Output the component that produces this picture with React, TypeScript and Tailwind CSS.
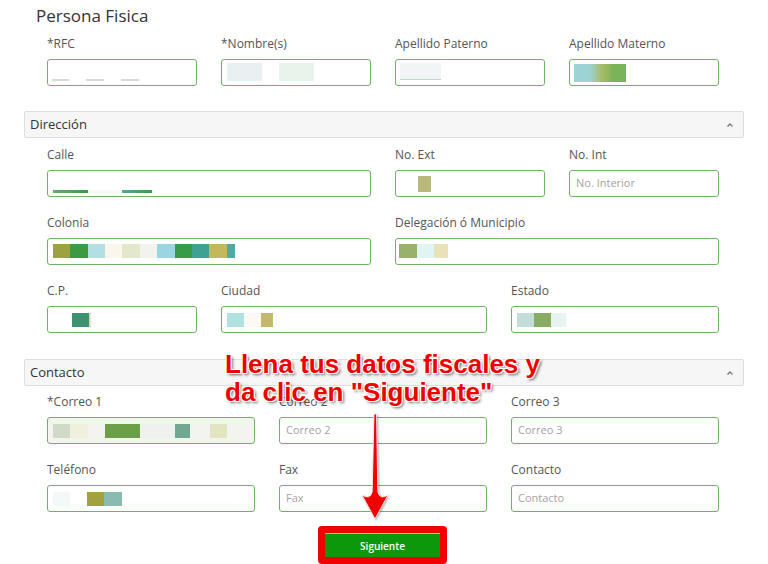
import React from "react";

const font = "font-['Open_Sans',_'Noto_Sans',_sans-serif]";

function S({ c }: { c: string }) {
  return <i className={"block shrink-0 " + c} />;
}

function Box({
  children,
  className = "",
}: {
  children?: React.ReactNode;
  className?: string;
}) {
  return (
    <div
      className={
        "h-[27px] border border-[#6fb463] rounded-[3px] overflow-hidden " +
        className
      }
    >
      {children}
    </div>
  );
}

function Field({
  label,
  w,
  children,
  boxClass = "",
}: {
  label: string;
  w: string;
  children?: React.ReactNode;
  boxClass?: string;
}) {
  return (
    <div className={"shrink-0 " + w}>
      <div className="h-[16px] leading-[16px] text-[12px] text-[#555] whitespace-nowrap">
        {label}
      </div>
      <div className="mt-[7px]">
        <Box className={boxClass}>{children}</Box>
      </div>
    </div>
  );
}

function Ph({ t }: { t: string }) {
  return (
    <div className="h-full flex items-center pl-[6px] text-[11px] text-[#a3a3a3]">
      {t}
    </div>
  );
}

function Header({ title }: { title: string }) {
  return (
    <div className="mx-[24px] h-[27px] border border-[#dedede] bg-[#f6f6f6] rounded-[2px] flex items-center justify-between pl-[5px] pr-[9px] text-[13px] text-[#333]">
      <span>{title}</span>
      <svg width="8" height="6" viewBox="0 0 8 6" className="mt-[1px]">
        <path d="M1.5 4.5 L4 2 L6.5 4.5" fill="none" stroke="#777" strokeWidth="1.3" />
      </svg>
    </div>
  );
}

export default function App() {
  return (
    <div className={"relative w-[768px] h-[564px] overflow-hidden bg-white " + font}>
      <div className="pl-[36px] pt-[5px] text-[17px] leading-[22px] text-[#333]">
        Persona Fisica
      </div>

      {/* Row 1 */}
      <div className="mt-[9px] pl-[47px] flex gap-[24px]">
        <Field label="*RFC" w="w-[150px]">
          <div className="flex pl-[4px] pt-[19px]">
            <S c="w-[17px] h-[2px] bg-[#d6dad6]" />
            <S c="w-[17px] h-[2px]" />
            <S c="w-[18px] h-[2px] bg-[#d6dad6]" />
            <S c="w-[17px] h-[2px]" />
            <S c="w-[18px] h-[2px] bg-[#d6dad6]" />
          </div>
        </Field>
        <Field label="*Nombre(s)" w="w-[150px]">
          <div className="flex pl-[5px] pt-[3px]">
            <S c="w-[35px] h-[18px] bg-[#eaeff1]" />
            <S c="w-[17px] h-[18px]" />
            <S c="w-[35px] h-[18px] bg-[#eaf2ec]" />
          </div>
        </Field>
        <Field label="Apellido Paterno" w="w-[150px]">
          <div className="pl-[4px] pt-[3px]">
            <S c="w-[41px] h-[16px] bg-[#f1f5f6]" />
            <S c="w-[41px] h-[1px] bg-[#b9dcbc]" />
          </div>
        </Field>
        <Field label="Apellido Materno" w="w-[150px]">
          <div className="flex pl-[4px] pt-[4px]">
            <S c="w-[52px] h-[18px] bg-[linear-gradient(90deg,#9fd2d4_0%,#9fd2d4_30%,#a6ba64_55%,#7bb35a_75%,#7bb35a_100%)]" />
          </div>
        </Field>
      </div>

      <div className="mt-[25px]">
        <Header title="Dirección" />
      </div>

      {/* Calle row */}
      <div className="mt-[9px] pl-[47px] flex gap-[24px]">
        <Field label="Calle" w="w-[324px]">
          <div className="flex pl-[5px] pt-[19px]">
            <S c="w-[35px] h-[3px] bg-[linear-gradient(90deg,#68a87a,#3d9a4a)]" />
            <S c="w-[34px] h-[3px] bg-[#f6f8f6]" />
            <S c="w-[30px] h-[3px] bg-[linear-gradient(90deg,#5aa898,#3d9a4a)]" />
          </div>
        </Field>
        <Field label="No. Ext" w="w-[150px]">
          <div className="flex pl-[22px] pt-[5px]">
            <S c="w-[13px] h-[16px] bg-[#b6b97a]" />
          </div>
        </Field>
        <Field label="No. Int" w="w-[150px]">
          <Ph t="No. Interior" />
        </Field>
      </div>

      {/* Colonia row */}
      <div className="mt-[18px] pl-[47px] flex gap-[24px]">
        <Field label="Colonia" w="w-[324px]">
          <div className="flex pl-[5px] pt-[5px]">
            <S c="w-[17px] h-[14px] bg-[#9ba23f]" />
            <S c="w-[18px] h-[14px] bg-[#3a9b42]" />
            <S c="w-[17px] h-[14px] bg-[#b3dfe3]" />
            <S c="w-[17px] h-[14px] bg-[#faf6ea]" />
            <S c="w-[18px] h-[14px] bg-[#e5e7cb]" />
            <S c="w-[17px] h-[14px] bg-[#f1f3ef]" />
            <S c="w-[18px] h-[14px] bg-[#9bd5e2]" />
            <S c="w-[17px] h-[14px] bg-[#389b48]" />
            <S c="w-[17px] h-[14px] bg-[#3fa191]" />
            <S c="w-[18px] h-[14px] bg-[#c2b85e]" />
            <S c="w-[8px] h-[14px] bg-[#51a9a3]" />
          </div>
        </Field>
        <Field label="Delegación ó Municipio" w="w-[324px]">
          <div className="flex pl-[3px] pt-[5px]">
            <S c="w-[18px] h-[14px] bg-[#9ab169]" />
            <S c="w-[17px] h-[14px] bg-[#e1f4f4]" />
            <S c="w-[14px] h-[14px] bg-[#e9e1ba]" />
          </div>
        </Field>
      </div>

      {/* CP row */}
      <div className="mt-[18px] pl-[47px] flex gap-[24px]">
        <Field label="C.P." w="w-[150px]">
          <div className="flex pl-[24px] pt-[6px]">
            <S c="w-[17px] h-[14px] bg-[#3f9270]" />
            <S c="w-[2px] h-[14px] bg-[#e8dcc0]" />
          </div>
        </Field>
        <Field label="Ciudad" w="w-[266px]">
          <div className="flex pl-[5px] pt-[6px]">
            <S c="w-[17px] h-[14px] bg-[#b2e1e2]" />
            <S c="w-[17px] h-[14px] bg-[#fbf9f1]" />
            <S c="w-[12px] h-[14px] bg-[#c2b96f]" />
          </div>
        </Field>
        <Field label="Estado" w="w-[208px]">
          <div className="flex pl-[5px] pt-[6px]">
            <S c="w-[17px] h-[14px] bg-[#c3ddd9]" />
            <S c="w-[17px] h-[14px] bg-[#8aab62]" />
            <S c="w-[15px] h-[14px] bg-[#e6f4f1]" />
          </div>
        </Field>
      </div>

      <div className="mt-[26px]">
        <Header title="Contacto" />
      </div>

      {/* Correo row */}
      <div className="mt-[8px] pl-[47px] flex gap-[24px]">
        <Field label="*Correo 1" w="w-[208px]" boxClass="bg-[#f3f4f0]">
          <div className="flex pl-[5px] pt-[6px]">
            <S c="w-[17px] h-[14px] bg-[#d1d9c9]" />
            <S c="w-[18px] h-[14px] bg-[#eff1dc]" />
            <S c="w-[17px] h-[14px]" />
            <S c="w-[35px] h-[14px] bg-[#6b9f48]" />
            <S c="w-[35px] h-[14px] bg-[#eef1ee]" />
            <S c="w-[15px] h-[14px] bg-[#70a98f]" />
            <S c="w-[20px] h-[14px]" />
            <S c="w-[17px] h-[14px] bg-[#e1e6c1]" />
          </div>
        </Field>
        <Field label="Correo 2" w="w-[208px]">
          <Ph t="Correo 2" />
        </Field>
        <Field label="Correo 3" w="w-[208px]">
          <Ph t="Correo 3" />
        </Field>
      </div>

      {/* Telefono row */}
      <div className="mt-[18px] pl-[47px] flex gap-[24px]">
        <Field label="Teléfono" w="w-[208px]">
          <div className="flex pl-[5px] pt-[6px]">
            <S c="w-[17px] h-[14px] bg-[#f3f9f9]" />
            <S c="w-[17px] h-[14px]" />
            <S c="w-[17px] h-[14px] bg-[#a1a13f]" />
            <S c="w-[18px] h-[14px] bg-[#89bbb1]" />
          </div>
        </Field>
        <Field label="Fax" w="w-[208px]">
          <Ph t="Fax" />
        </Field>
        <Field label="Contacto" w="w-[208px]">
          <Ph t="Contacto" />
        </Field>
      </div>

      {/* Button */}
      <div className="mt-[14px] flex justify-center pr-[3px]">
        <div className="w-[129px] h-[38px] border-[7px] border-[#f00000] rounded-[4px] bg-[#f00000]">
          <button className="w-full h-full bg-[#0b990b] border-t border-[#9fd49f] text-white text-[10px] font-semibold flex items-center justify-center pt-[2px]">
            Siguiente
          </button>
        </div>
      </div>

      {/* Annotation overlay */}
      <div className="absolute left-[225px] top-[350px] font-['Liberation_Sans',_Arial,_sans-serif] font-bold text-[26px] leading-[28px] text-[#ee0000] whitespace-nowrap [text-shadow:1px_1px_0_#fff,-1px_-1px_0_#fff,1px_-1px_0_#fff,-1px_1px_0_#fff,2px_2px_3px_rgba(0,0,0,0.6)]">
        <div>Llena tus datos fiscales y</div>
        <div>da clic en "Siguiente"</div>
      </div>

      <svg
        className="absolute left-[360px] top-[412px]"
        width="32"
        height="110"
        viewBox="0 0 32 110"
      >
        <path
          d="M14 2 L16.5 2 L17.8 80 Q20 88 28 83 L15 107 L2 83 Q10 88 12.2 80 Z"
          fill="#f00000"
          stroke="#fff"
          strokeWidth="0.8"
          style={{ filter: "drop-shadow(1px 1px 1px rgba(0,0,0,0.35))" }}
        />
      </svg>
    </div>
  );
}
